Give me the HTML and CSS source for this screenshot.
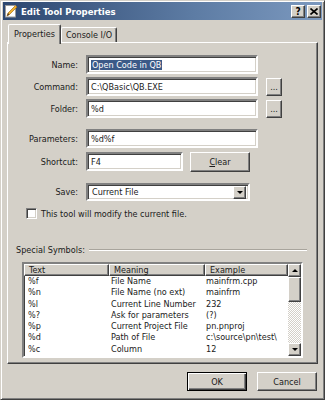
FILE: index.html
```html
<!DOCTYPE html>
<html lang="en">
<head>
    <meta charset="UTF-8">
    <title>Edit Tool Properties</title>
    <link rel="stylesheet" href="styles.css">
</head>
<body>
    <div class="window">
        <div class="titlebar">
            <svg class="app-icon" width="14" height="14" viewBox="0 0 14 14">
                <rect x="1.5" y="1.5" width="10" height="11.5" fill="#fff" stroke="#9a9a9a"/>
                <path d="M3 12 L4 9 L11.5 1.5 L13 3 L5.5 10.5 Z" fill="#f2b430" stroke="#a8701a" stroke-width="0.7"/>
                <path d="M3 12 L4 9 L5.5 10.5 Z" fill="#5a4020"/>
            </svg>
            <span class="title">Edit Tool Properties</span>
            <div class="title-buttons">
                <span class="tbtn">?</span>
                <span class="tbtn">
                    <svg width="8" height="7" viewBox="0 0 8 7"><path d="M0.5 0.5 L7.5 6.5 M7.5 0.5 L0.5 6.5" stroke="#000" stroke-width="1.6"/></svg>
                </span>
            </div>
        </div>

        <div class="tabs">
            <div class="tab active">Properties</div>
            <div class="tab">Console I/O</div>
        </div>

        <div class="panel">
            <div class="row">
                <span class="label">Name:</span>
                <div class="field wide"><span class="selected-text">Open Code in QB</span></div>
            </div>
            <div class="row gap-small">
                <span class="label">Command:</span>
                <div class="field wide">C:\QBasic\QB.EXE</div>
                <span class="btn browse">...</span>
            </div>
            <div class="row gap-small">
                <span class="label">Folder:</span>
                <div class="field wide">%d</div>
                <span class="btn browse">...</span>
            </div>
            <div class="row gap-big">
                <span class="label">Parameters:</span>
                <div class="field wide">%d%f</div>
            </div>
            <div class="row gap-mid">
                <span class="label">Shortcut:</span>
                <div class="field short">F4</div>
                <span class="btn clear"><u>C</u>lear</span>
            </div>
            <div class="row save-row">
                <span class="label">Save:</span>
                <div class="select">
                    <span class="select-text">Current File</span>
                    <span class="drop-btn"><span class="arrow-down"></span></span>
                </div>
            </div>
            <div class="check-row">
                <span class="checkbox"></span>
                <span>This tool will modify the current file.</span>
            </div>
            <div class="group-title">
                <span>Special Symbols:</span>
                <span class="etched"></span>
            </div>
            <div class="list">
                <div class="table">
                    <div class="list-head">
                        <span class="head-cell">Text</span>
                        <span class="head-cell">Meaning</span>
                        <span class="head-cell">Example</span>
                    </div>
                    <div class="list-body">
                        <div class="list-row"><span>%f</span><span>File Name</span><span>mainfrm.cpp</span></div>
                        <div class="list-row"><span>%n</span><span>File Name (no ext)</span><span>mainfrm</span></div>
                        <div class="list-row"><span>%l</span><span>Current Line Number</span><span>232</span></div>
                        <div class="list-row"><span>%?</span><span>Ask for parameters</span><span>(?)</span></div>
                        <div class="list-row"><span>%p</span><span>Current Project File</span><span>pn.pnproj</span></div>
                        <div class="list-row"><span>%d</span><span>Path of File</span><span>c:\source\pn\test\</span></div>
                        <div class="list-row"><span>%c</span><span>Column</span><span>12</span></div>
                    </div>
                </div>
                <div class="scrollbar">
                    <span class="sb-btn"><span class="arrow-up"></span></span>
                    <span class="sb-thumb"></span>
                    <span class="sb-track"></span>
                    <span class="sb-btn"><span class="arrow-down"></span></span>
                </div>
            </div>
        </div>

        <div class="footer">
            <span class="btn action default">OK</span>
            <span class="btn action">Cancel</span>
        </div>
    </div>
</body>
</html>
```

FILE: styles.css
```css
* {
     box-sizing: border-box;
 }

body {
     margin: 0;
     background-color: #d4d0c8;
     font-family: "DejaVu Sans Condensed", "Liberation Sans", sans-serif;
     font-size: 9px;
     color: #1a1a1a;
 }

.window {
     width: 325px;
     height: 400px;
     padding: 1px 2px 2px 2px;
     background-color: #d4d0c8;
     border: 1px solid;
     border-color: #d4d0c8 #404040 #404040 #d4d0c8;
     box-shadow: inset 1px 1px #fff, inset -1px -1px #808080;
     display: flex;
     flex-direction: column;
 }

/* title bar */
.titlebar {
     height: 18px;
     display: flex;
     align-items: center;
     padding: 0 1px 0 1px;
     background: linear-gradient(90deg, #2d4770, #5d7ca4 60%, #7c99bf);
 }

.app-icon {
     flex: none;
 }

.title {
     margin-left: 3px;
     color: #fff;
     font-weight: bold;
     font-size: 9.5px;
 }

.title-buttons {
     margin-left: auto;
     display: flex;
     gap: 2px;
 }

.tbtn {
     width: 14px;
     height: 13px;
     display: flex;
     align-items: center;
     justify-content: center;
     background-color: #d4d0c8;
     border: 1px solid;
     border-color: #fff #404040 #404040 #fff;
     box-shadow: inset -1px -1px #808080;
     font-weight: bold;
     font-size: 10px;
     color: #000;
 }

/* tabs */
.tabs {
     height: 18px;
     margin-top: 4px;
     padding-left: 5px;
     display: flex;
     align-items: flex-start;
 }

.tab {
     margin-top: 3px;
     height: 15px;
     width: 56px;
     display: flex;
     align-items: center;
     justify-content: center;
     border: 1px solid;
     border-bottom: none;
     border-color: #fff #404040 #404040 #fff;
     border-radius: 2px 2px 0 0;
     box-shadow: inset -1px 0 #808080;
 }

.tab.active {
     position: relative;
     z-index: 1;
     margin-top: 0;
     height: 20px;
     width: 53px;
     padding-bottom: 2px;
     background-color: #d4d0c8;
 }

/* tab page */
.panel {
     margin-left: 4px;
     width: 311px;
     height: 322px;
     padding-top: 12px;
     border: 1px solid;
     border-color: #fff #404040 #404040 #fff;
     box-shadow: inset -1px -1px #808080;
 }

.row {
     height: 19px;
     display: flex;
     align-items: center;
 }

.gap-small {
     margin-top: 3px;
 }

.gap-big {
     margin-top: 11px;
 }

.gap-mid {
     margin-top: 4px;
 }

.save-row {
     margin-top: 12px;
     height: 18px;
 }

.label {
     width: 70px;
     margin-right: 8px;
     text-align: right;
 }

.field {
     height: 19px;
     padding-left: 3px;
     display: flex;
     align-items: center;
     background-color: #fff;
     border: 2px solid;
     border-color: #808080 #fff #fff #808080;
     box-shadow: inset 1px 1px #404040, inset -1px -1px #d4d0c8;
 }

.field.wide {
     width: 172px;
 }

.field.short {
     width: 97px;
 }

.selected-text {
     background-color: #3b5a88;
     color: #fff;
     padding: 0 1px;
 }

.btn {
     display: flex;
     align-items: center;
     justify-content: center;
     background-color: #d4d0c8;
     border: 1px solid;
     border-color: #fff #404040 #404040 #fff;
     box-shadow: inset -1px -1px #808080;
 }

.browse {
     width: 16px;
     height: 18px;
     margin-left: 8px;
     align-items: flex-end;
     padding-bottom: 3px;
 }

.clear {
     width: 60px;
     height: 20px;
     margin-left: 7px;
 }

.select {
     width: 164px;
     height: 18px;
     padding: 0 2px 0 4px;
     display: flex;
     align-items: center;
     background-color: #fff;
     border: 2px solid;
     border-color: #808080 #fff #fff #808080;
     box-shadow: inset 1px 1px #404040, inset -1px -1px #d4d0c8;
 }

.select-text {
     flex: 1;
 }

.drop-btn {
     width: 13px;
     height: 13px;
     display: flex;
     align-items: center;
     justify-content: center;
     border: 1px solid;
     border-color: #fff #404040 #404040 #fff;
     box-shadow: inset -1px -1px #808080;
     background-color: #d4d0c8;
 }

.arrow-down {
     width: 0;
     height: 0;
     border-left: 3px solid transparent;
     border-right: 3px solid transparent;
     border-top: 3px solid #000;
 }

.arrow-up {
     width: 0;
     height: 0;
     border-left: 3px solid transparent;
     border-right: 3px solid transparent;
     border-bottom: 3px solid #000;
 }

.check-row {
     margin-top: 7px;
     padding-left: 18px;
     height: 11px;
     display: flex;
     align-items: center;
 }

.checkbox {
     width: 11px;
     height: 11px;
     margin-right: 4px;
     background-color: #fff;
     border: 1px solid;
     border-color: #808080 #fff #fff #808080;
     box-shadow: inset 1px 1px #404040, inset -1px -1px #d4d0c8;
 }

.group-title {
     margin-top: 25px;
     height: 12px;
     padding-left: 8px;
     padding-right: 10px;
     display: flex;
     align-items: center;
 }

.etched {
     flex: 1;
     margin-left: 4px;
     height: 2px;
     border-top: 1px solid #a8a49c;
     border-bottom: 1px solid #fff;
 }

/* symbols list */
.list {
     margin-top: 6px;
     margin-left: 14px;
     width: 281px;
     height: 96px;
     display: flex;
     background-color: #fff;
     border: 2px solid;
     border-color: #808080 #fff #fff #808080;
     box-shadow: inset 1px 1px #404040;
 }

.table {
     flex: 1;
     overflow: hidden;
 }

.list-head {
     height: 12px;
     display: grid;
     grid-template-columns: 85px 96px 1fr;
 }

.head-cell {
     padding-left: 4px;
     display: flex;
     align-items: center;
     background-color: #d4d0c8;
     border: 1px solid;
     border-color: #fff #404040 #404040 #fff;
     box-shadow: inset -1px -1px #808080;
 }

.list-row {
     height: 11.3px;
     line-height: 11.3px;
     display: grid;
     grid-template-columns: 85px 96px 1fr;
     white-space: nowrap;
 }

.list-row span:first-child {
     padding-left: 4px;
 }

.list-row span:nth-child(2) {
     padding-left: 2px;
 }

.list-row span:nth-child(3) {
     padding-left: 1px;
 }

.scrollbar {
     width: 13px;
     display: flex;
     flex-direction: column;
     background: repeating-conic-gradient(#d4d0c8 0 25%, #fff 0 50%) 0 0 / 2px 2px;
 }

.sb-btn,
.sb-thumb {
     display: flex;
     align-items: center;
     justify-content: center;
     background-color: #d4d0c8;
     border: 1px solid;
     border-color: #fff #404040 #404040 #fff;
     box-shadow: inset -1px -1px #808080;
 }

.sb-btn {
     height: 13px;
 }

.sb-thumb {
     height: 25px;
 }

.sb-track {
     flex: 1;
 }

/* dialog buttons */
.footer {
     margin-top: 8px;
     padding-right: 5px;
     display: flex;
     justify-content: flex-end;
     gap: 10px;
 }

.action {
     width: 60px;
     height: 19px;
 }

.action.default {
     border-color: #000;
     box-shadow: inset 1px 1px #fff, inset -1px -1px #404040, inset -2px -2px #808080;
 }
```
